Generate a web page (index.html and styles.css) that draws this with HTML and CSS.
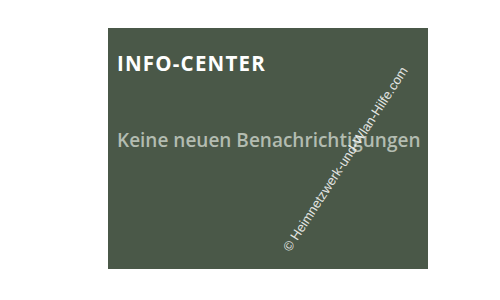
FILE: index.html
```html
<!DOCTYPE html>
<html>
<head>
<meta charset="utf-8">
<link rel="stylesheet" href="styles.css">
</head>
<body>
<div class="panel">
  <h1 class="title">INFO-CENTER</h1>
  <p class="empty">Keine neuen Benachrichtigungen</p>
  <div class="watermark">© Heimnetzwerk-und-Wlan-Hilfe.com</div>
</div>
</body>
</html>
```
FILE: styles.css
```css
html, body {
  margin: 0;
  padding: 0;
  background: #ffffff;
}
body {
  width: 500px;
  height: 300px;
  font-family: "Open Sans", "Noto Sans", sans-serif;
}
.panel {
  position: relative;
  margin: 28px 0 0 108px;
  width: 320px;
  height: 241px;
  background: #4a5848;
  padding: 22px 0 0 9px;
  box-sizing: border-box;
  overflow: hidden;
}
.title {
  margin: 0;
  font-size: 20.5px;
  font-weight: 700;
  letter-spacing: 1.2px;
  color: #ffffff;
  line-height: 26px;
}
.empty {
  margin: 51px 0 0 0;
  font-size: 19px;
  font-weight: 600;
  letter-spacing: 0;
  color: #b3bcb1;
  line-height: 26px;
  white-space: nowrap;
}
.watermark {
  position: absolute;
  left: 172px;
  top: 218px;
  transform-origin: 0 0;
  transform: rotate(-57deg);
  font-family: "Liberation Sans", sans-serif;
  font-size: 13.2px;
  color: rgba(255, 255, 255, 0.85);
  white-space: nowrap;
}
```
